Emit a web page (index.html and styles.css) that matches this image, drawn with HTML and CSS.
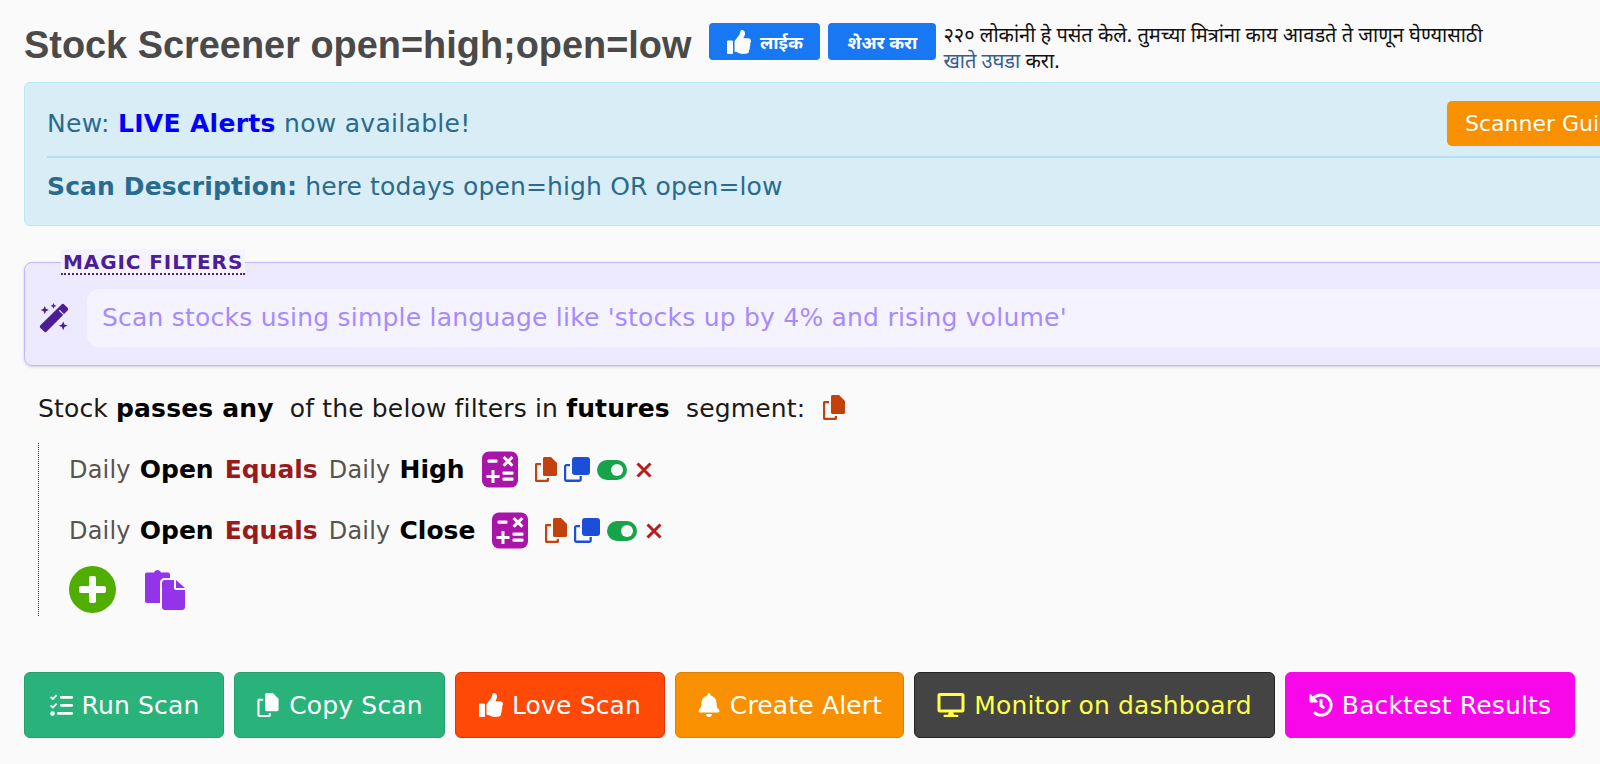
FILE: index.html
```html
<!DOCTYPE html>
<html lang="en">
<head>
<meta charset="utf-8">
<title>Stock Screener open=high;open=low</title>
<link rel="stylesheet" href="styles.css">
</head>
<body>
<svg class="defs" width="0" height="0" aria-hidden="true">
  <symbol id="thumb" viewBox="0 0 512 512"><path d="M104 224H24c-13.255 0-24 10.745-24 24v240c0 13.255 10.745 24 24 24h80c13.255 0 24-10.745 24-24V248c0-13.255-10.745-24-24-24zM384 81.452c0 42.416-25.97 66.208-33.277 94.548h101.723c33.397 0 59.397 27.746 59.553 58.098.084 17.938-7.546 37.249-19.439 49.197l-.11.11c9.836 23.337 8.237 56.037-9.308 79.469 8.681 25.895-.069 57.704-16.382 74.757 4.298 17.598 2.244 32.575-6.148 44.632C440.202 511.587 389.616 512 346.839 512l-2.845-.001c-48.287-.017-87.806-17.598-119.56-31.725-15.957-7.099-36.821-15.887-52.651-16.178-6.54-.12-11.783-5.457-11.783-11.998v-213.77c0-3.2 1.282-6.271 3.558-8.521 39.614-39.144 56.648-80.587 89.117-113.111 14.804-14.832 20.188-37.236 25.393-58.902C282.515 39.293 291.817 0 312 0c24 0 72 8 72 81.452z"/></symbol>
  <symbol id="copy-pair" viewBox="0 0 22 25"><path d="M8 1.500C8 .7 8.700 0 9.500 0H16l6 6v11.500c0 .8-.7 1.500-1.500 1.500h-11C8.700 19 8 18.300 8 17.500z"/><path d="M1.500 6H6v2.200H2.200v14.600h9.600V21H14v2.500c0 .8-.7 1.500-1.500 1.500h-11C.7 25 0 24.300 0 23.500v-16C0 6.700.7 6 1.500 6z"/></symbol>
  <symbol id="clone" viewBox="0 0 26 25"><rect x="8" y="0" width="18" height="18" rx="3"/><path d="M2.500 7H6v2.200H2.500c-.2 0-.3.100-.3.300v12.800c0 .2.100.3.300.3h12.800c.2 0 .3-.1.300-.3V19h2.200v3.500c0 1.400-1.100 2.500-2.500 2.500h-13C1.100 25 0 23.900 0 22.500v-13C0 8.100 1.100 7 2.500 7z"/></symbol>
  <symbol id="calc" viewBox="0 0 36 36"><rect width="36" height="36" rx="7"/><g fill="#fff"><rect x="5.500" y="8" width="10" height="3.200" rx="1"/><path d="M21.500 5.500l2.200-2 3.300 3.300 3.300-3.300 2.200 2-3.300 3.300 3.300 3.400-2.200 2-3.300-3.300-3.300 3.300-2.200-2 3.300-3.400z" transform="translate(-1 1)"/><path d="M9 17.500h3v5h5v3h-5v5H9v-5H4v-3h5z" transform="translate(0.500 1)"/><rect x="20.500" y="20" width="11" height="3.200" rx="1"/><rect x="20.500" y="26" width="11" height="3.200" rx="1"/></g></symbol>
  <symbol id="list-check" viewBox="0 0 24 24"><path d="M1 4.500l1.300-1.300 1.500 1.500L7 1.500l1.300 1.300-4.500 4.500zM1 13l1.300-1.300 1.500 1.500L7 10l1.300 1.300-4.500 4.500z"/><circle cx="3.500" cy="20.500" r="2.300"/><rect x="11" y="3" width="13" height="2.800" rx="1.200"/><rect x="11" y="11" width="13" height="2.800" rx="1.200"/><rect x="8" y="19" width="16" height="2.800" rx="1.200"/></symbol>
  <symbol id="bell" viewBox="0 0 448 512"><path d="M224 512c35.320 0 63.970-28.650 63.970-64H160.030c0 35.350 28.650 64 63.970 64zm215.390-149.710c-19.320-20.760-55.470-51.990-55.470-154.290 0-77.700-54.480-139.900-127.940-155.160V32c0-17.670-14.320-32-31.980-32s-31.980 14.330-31.980 32v20.840C118.560 68.100 64.080 130.300 64.080 208c0 102.300-36.150 133.530-55.470 154.290-6 6.450-8.660 14.160-8.610 21.710.11 16.400 12.980 32 32.100 32h383.800c19.120 0 32-15.600 32.100-32 .05-7.550-2.610-15.270-8.610-21.710z"/></symbol>
  <symbol id="desktop" viewBox="0 0 576 512"><path d="M528 0H48C21.500 0 0 21.500 0 48v320c0 26.500 21.500 48 48 48h192l-16 48h-72c-13.300 0-24 10.700-24 24s10.700 24 24 24h272c13.300 0 24-10.700 24-24s-10.700-24-24-24h-72l-16-48h192c26.500 0 48-21.500 48-48V48c0-26.500-21.500-48-48-48zm-16 352H64V64h448v288z"/></symbol>
  <symbol id="history" viewBox="0 0 512 512"><path d="M504 255.531c.253 136.640-111.180 248.372-247.820 248.468-59.015.042-113.223-20.530-155.822-54.911-11.077-8.940-11.905-25.541-1.839-35.607l11.267-11.267c8.609-8.609 22.353-9.551 31.891-1.984C173.062 425.135 212.781 440 256 440c101.705 0 184-82.311 184-184 0-101.705-82.311-184-184-184-48.814 0-93.149 18.969-126.068 49.932l50.754 50.754c10.080 10.080 2.941 27.314-11.313 27.314H24c-8.837 0-16-7.163-16-16V38.627c0-14.254 17.234-21.393 27.314-11.314l49.372 49.372C129.209 34.136 189.552 8 256 8c136.810 0 247.747 110.780 248 247.531zm-180.912 78.784l9.823-12.630c8.138-10.463 6.253-25.542-4.210-33.679L288 256.349V152c0-13.255-10.745-24-24-24h-16c-13.255 0-24 10.745-24 24v135.651l65.409 50.874c10.463 8.137 25.541 6.253 33.679-4.210z"/></symbol>
  <symbol id="cross" viewBox="0 0 16 16"><path d="M1.500 1.500l13 13M14.500 1.500l-13 13" fill="none" stroke="currentColor" stroke-width="3"/></symbol>
</svg>

<main class="page">
  <header class="title-row">
    <h1 class="title">Stock Screener open=high;open=low</h1>
    <button class="fb-btn fb-like"><svg class="fb-icon"><use href="#thumb"/></svg>लाईक</button>
    <button class="fb-btn fb-share">शेअर करा</button>
    <p class="fb-text">२२० लोकांनी हे पसंत केले. तुमच्या मित्रांना काय आवडते ते जाणून घेण्यासाठी<br><a class="fb-link">खाते उघडा</a> करा.</p>
  </header>

  <section class="alert">
    <div class="alert-top">
      <span class="alert-news">New: <a class="live">LIVE Alerts</a> now available!</span>
      <button class="guide">Scanner Guide</button>
    </div>
    <hr class="alert-rule">
    <p class="alert-desc"><b>Scan Description:</b> here todays open=high OR open=low</p>
  </section>

  <fieldset class="magic">
    <legend class="magic-legend">MAGIC FILTERS</legend>
    <div class="magic-row">
      <svg class="wand" viewBox="0 0 32 32"><path d="M27 1.500l3.500 3.500c.8.800.8 1.900 0 2.700L9 29.500c-.8.800-1.900.8-2.700 0l-3.800-3.800c-.8-.8-.8-1.900 0-2.700L24.300 1.500c.8-.8 1.900-.8 2.700 0z"/><path d="M22 7.500l4.500 4.500" stroke="#ede9fe" stroke-width="1.300" fill="none"/><path d="M7 3l1.200 3 3 1.200-3 1.200L7 11.500 5.800 8.400l-3-1.200 3-1.200zM16 0l.9 2.100 2.100.9-2.100.9L16 6l-.9-2.100L13 3l2.100-.9zM26 19l1.300 3.200 3.200 1.300-3.200 1.300L26 28l-1.300-3.200-3.200-1.300 3.200-1.300z"/></svg>
      <div class="magic-input">Scan stocks using simple language like 'stocks up by 4% and rising volume'</div>
    </div>
  </fieldset>

  <p class="passes">Stock <b>passes any</b>&nbsp; of the below filters in <b>futures</b>&nbsp; segment: <svg class="i-copy passes-copy"><use href="#copy-pair"/></svg></p>

  <div class="filters">
    <div class="filter">
      <span class="tf">Daily</span><b>Open</b><b class="op">Equals</b><span class="tf">Daily</span><b>High</b>
      <svg class="i-calc"><use href="#calc"/></svg>
      <svg class="i-copy"><use href="#copy-pair"/></svg>
      <svg class="i-clone"><use href="#clone"/></svg>
      <span class="toggle"></span>
      <svg class="cross"><use href="#cross"/></svg>
    </div>
    <div class="filter">
      <span class="tf">Daily</span><b>Open</b><b class="op">Equals</b><span class="tf">Daily</span><b>Close</b>
      <svg class="i-calc"><use href="#calc"/></svg>
      <svg class="i-copy"><use href="#copy-pair"/></svg>
      <svg class="i-clone"><use href="#clone"/></svg>
      <span class="toggle"></span>
      <svg class="cross"><use href="#cross"/></svg>
    </div>
    <div class="add-row">
      <span class="add"></span>
      <svg class="paste" viewBox="0 0 40 40"><path d="M2 2.500h7c.6-1.500 2-2.500 3.500-2.500S15.400 1 16 2.500h7c1.200 0 2 .8 2 2V8h-5c-3 0-5 2-5 5v20H2c-1.200 0-2-.8-2-2V4.500c0-1.200.8-2 2-2z"/><path d="M20 10h9v8c0 1 .8 2 2 2h9v17c0 1.700-1.300 3-3 3H20c-1.700 0-3-1.300-3-3V13c0-1.700 1.300-3 3-3zM31 10l9 8h-9z"/></svg>
    </div>
  </div>

  <div class="actions">
    <button class="act act-green act-run"><svg class="act-icon"><use href="#list-check"/></svg>Run Scan</button>
    <button class="act act-green act-copy"><svg class="act-icon"><use href="#copy-pair"/></svg>Copy Scan</button>
    <button class="act act-love"><svg class="act-icon"><use href="#thumb"/></svg>Love Scan</button>
    <button class="act act-alert"><svg class="act-icon"><use href="#bell"/></svg>Create Alert</button>
    <button class="act act-monitor"><svg class="act-icon act-wide"><use href="#desktop"/></svg>Monitor on dashboard</button>
    <button class="act act-back"><svg class="act-icon"><use href="#history"/></svg>Backtest Results</button>
  </div>
</main>
</body>
</html>
```

FILE: styles.css
```css
html, body { margin: 0; height: 764px; overflow: hidden; background: #fafafa; }
.defs { position: absolute; }
.page { width: 1700px; padding: 0 0 0 24px; box-sizing: border-box; font-family: "DejaVu Sans", Verdana, sans-serif; color: #111; }
button { font-family: inherit; cursor: pointer; }

.title-row { display: flex; align-items: flex-start; height: 82px; padding-top: 22px; box-sizing: border-box; }
.title { margin: 0 18px 0 0; font: bold 37.900px/46px "Liberation Sans", Arial, sans-serif; color: #4a4a4a; white-space: nowrap; }
.fb-btn { height: 37px; margin-top: 1px; border: 0; border-radius: 4px; background: #1877f2; color: #fff; font: bold 18px "Noto Sans", "Liberation Sans", sans-serif; display: inline-flex; align-items: center; justify-content: center; padding: 0; }
.fb-like { width: 111px; margin-right: 8px; gap: 9px; }
.fb-share { width: 108px; margin-right: 7px; }
.fb-icon { width: 24px; height: 24px; fill: #fff; }
.fb-text { margin: 0; font: 20px/26px "Noto Sans", "Liberation Sans", sans-serif; color: #111; white-space: nowrap; }
.fb-link { color: #365e8f; }

.alert { height: 144px; box-sizing: border-box; border: 1px solid #bce8f1; border-radius: 6px; background: #d9edf7; color: #296b8d; padding: 18px 0 0 22px; font-size: 25px; }
.alert-top { display: flex; justify-content: space-between; align-items: center; height: 45px; padding-right: 62px; }
.alert-news { letter-spacing: .3px; }
.live { color: #00f; font-weight: bold; }
.guide { width: 190px; height: 45px; border: 0; border-radius: 5px; background: #f89000; color: #fff; font-size: 22px; padding: 0 0 0 18px; text-align: left; white-space: nowrap; overflow: hidden; }
.alert-rule { margin: 10px 0 0; border: 0; border-top: 2px solid #b2e1f3; }
.alert-desc { margin: 0; padding-top: 11px; line-height: 36px; letter-spacing: .13px; }

.magic { margin: 23px 0 0; padding: 0; height: 117px; box-sizing: border-box; border: 1px solid #c4b5fd; border-radius: 8px; background: #ede9fe; box-shadow: 0 1px 3px rgba(76, 29, 149, .2); }
.magic-legend { margin-left: 36px; padding: 2px 2px 0; font-size: 20px; line-height: 22px; font-weight: bold; color: #4c1d95; letter-spacing: .9px; background: #f5f3ff; border-bottom: 2px dotted #4c1d95; }
.magic-row { display: flex; align-items: center; gap: 18px; padding: 14px 0 0 13px; }
.wand { width: 31px; height: 31px; fill: #4c1d95; flex: none; }
.magic-input { flex: 1; height: 58px; line-height: 58px; padding-left: 15px; border-radius: 12px; background: #f5f3ff; color: #a78bfa; font-size: 25px; letter-spacing: .22px; }

.passes { margin: 0; padding: 25px 0 0 14px; font-size: 25px; line-height: 36px; color: #1c1917; letter-spacing: .15px; }
.passes b { color: #000; }
.passes-copy { margin-left: 10px; vertical-align: -3px; }

.filters { display: flow-root; margin: 16px 0 0 14px; height: 173px; box-sizing: border-box; border-left: 1px dotted #333; padding-left: 30px; }
.filter { display: flex; align-items: center; height: 61px; font-size: 24px; gap: 9px; white-space: nowrap; }
.filter:first-child { margin-top: -4px; }
.filter b { color: #000; font-size: 25px; }
.tf { color: #57534e; letter-spacing: .2px; }
.filter .op { color: #991b1b; margin-left: 2px; margin-right: 2px; }
.i-calc { width: 36px; height: 37px; margin-left: 8px; fill: #a815a8; flex: none; }
.i-copy { width: 22px; height: 25px; fill: #c2410c; }
.filter .i-copy { margin-left: 8px; }
.i-clone { width: 26px; height: 25px; margin-left: -2px; fill: #1d4ed8; }
.toggle { position: relative; width: 30px; height: 20px; margin-left: -2px; border-radius: 10px; background: #16a34a; }
.toggle::after { content: ""; position: absolute; right: 4px; top: 4px; width: 12px; height: 12px; border-radius: 50%; background: #fafafa; }
.cross { width: 16px; height: 16px; color: #b91c1c; margin-left: 0; }

.add-row { display: flex; align-items: center; gap: 29px; margin-top: 5px; }
.add { position: relative; width: 47px; height: 47px; border-radius: 50%; background: #4fae00; }
.add::before, .add::after { content: ""; position: absolute; background: #fff; border-radius: 2px; }
.add::before { left: 10px; right: 10px; top: 20px; height: 7px; }
.add::after { top: 10px; bottom: 10px; left: 20px; width: 7px; }
.paste { width: 40px; height: 40px; fill: #9333ea; }

.actions { display: flex; gap: 10px; margin-top: 56px; }
.act { height: 66px; box-sizing: border-box; border-radius: 6px; border: 1px solid; color: #fff; font-size: 25px; letter-spacing: .15px; display: flex; align-items: center; justify-content: center; gap: 9px; padding: 0; white-space: nowrap; }
.act-icon { width: 24px; height: 24px; fill: currentColor; flex: none; }
.act-wide { width: 28px; }
.act-green { background: #2ab27b; border-color: #259d6d; }
.act-run { width: 200px; }
.act-copy { width: 211px; }
.act-love { width: 210px; background: #ff4906; border-color: #f02c00; }
.act-alert { width: 229px; background: #f89000; border-color: #e07f00; }
.act-monitor { width: 361px; background: #444; border-color: #222; color: #ffff45; }
.act-back { width: 290px; background: #f808e8; border-color: #f808e8; }
```
